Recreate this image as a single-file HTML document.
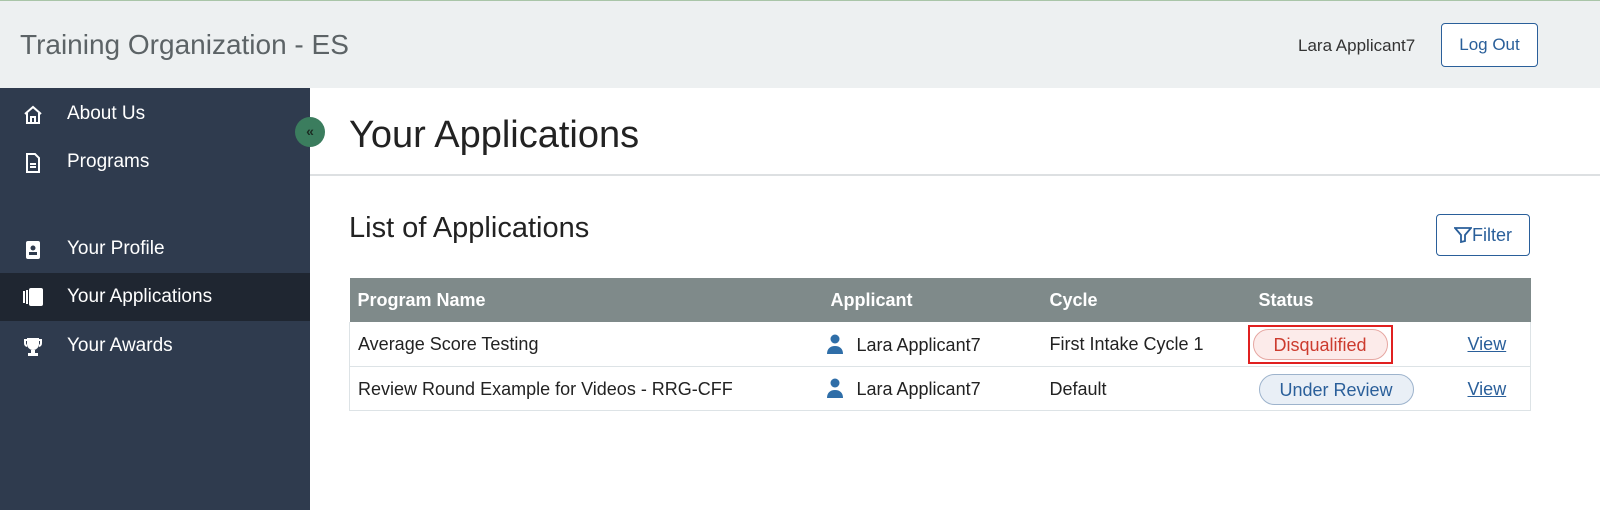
<!DOCTYPE html><html><head><style>
body{margin:0;width:1600px;height:510px;overflow:hidden;font-family:"Liberation Sans",sans-serif;background:#fff;position:relative}
.hdr{position:absolute;left:0;top:0;width:1600px;height:88px;background:#edf0f1;border-top:1px solid #a9c5a8;box-sizing:border-box}
.hdr .t{position:absolute;left:20px;top:28px;font-size:28px;color:#5c6366}
.hdr .u{position:absolute;left:1298px;top:35px;font-size:17px;color:#333}
.hdr .b{position:absolute;left:1441px;top:22px;width:97px;height:44px;border:1px solid #2a5f9a;border-radius:4px;background:#fff;color:#2a5f9a;font-size:17px;line-height:42px;text-align:center;box-sizing:border-box}
.side{position:absolute;left:0;top:88px;width:310px;height:422px;background:#2f3b4e}
.it{position:absolute;left:0;width:310px;height:44px;color:#fff;font-size:19px}
.it span{position:absolute;left:67px;top:12px}
.it svg{position:absolute;left:22px;top:13px}
.tog{position:absolute;left:295px;top:117px;width:30px;height:30px;border-radius:50%;background:#3b7d5e;color:#1b2b22;font-size:14px;font-weight:bold;text-align:center;line-height:28px}
h1{position:absolute;left:349px;top:114px;margin:0;font-weight:normal;font-size:38px;color:#222}
.div{position:absolute;left:310px;top:174px;width:1290px;height:2px;background:#dde0e2}
h2{position:absolute;left:349px;top:212px;margin:0;font-weight:normal;font-size:29px;color:#222}
.flt{position:absolute;left:1436px;top:214px;width:94px;height:42px;border:1px solid #2a5f9a;border-radius:4px;color:#2a5f9a;font-size:18px;box-sizing:border-box;line-height:40px;text-align:center}
table{position:absolute;left:349px;top:278px;width:1181px;border-collapse:collapse;font-size:18px;color:#222;table-layout:fixed}
th{background:#7f8a8a;color:#fff;text-align:left;height:44px;padding:0 0 0 8px;font-size:18px}
td{height:44px;padding:2px 0 0 8px;border-bottom:1px solid #dde3e6;box-sizing:border-box;white-space:nowrap}
tr td:first-child{border-left:1px solid #dde3e6}tr td:last-child{border-right:1px solid #dde3e6}
.pill{display:inline-block;border-radius:16px;padding:0 20px;height:31px;line-height:31px;font-size:18px;box-sizing:border-box}
a{color:#2a5f9a;text-decoration:underline}
</style></head><body>
<div class="hdr"><div class="t">Training Organization - ES</div><div class="u">Lara Applicant7</div><div class="b">Log Out</div></div>
<div class="side">
<div class="it" style="top:3px"><svg width="22" height="22" viewBox="0 0 22 22" fill="none" stroke="#fff" stroke-width="2"><path d="M3 10L11 3l8 7M5 9v10h12V9M9 19v-6h4v6"/></svg><span>About Us</span></div>
<div class="it" style="top:51px"><svg width="22" height="22" viewBox="0 0 22 22" fill="none" stroke="#fff" stroke-width="2"><path d="M5 2h8l4 4v14H5z"/><path d="M8 12h6M8 15h6"/></svg><span>Programs</span></div>
<div class="it" style="top:138px"><svg width="22" height="22" viewBox="0 0 22 22"><rect x="4" y="2" width="14" height="18" rx="2" fill="#fff"/><circle cx="11" cy="9" r="2.5" fill="#2f3b4e"/><rect x="7" y="13" width="8" height="3" fill="#2f3b4e"/></svg><span>Your Profile</span></div>
<div class="it" style="top:185px;background:#1f2631;height:48px"><svg width="22" height="22" viewBox="0 0 22 22" fill="#fff"><rect x="1" y="5" width="2" height="12"/><rect x="4" y="4" width="2" height="14"/><rect x="7" y="2" width="14" height="18" rx="2"/></svg><span style="top:13px">Your Applications</span></div>
<div class="it" style="top:235px"><svg width="22" height="22" viewBox="0 0 22 22" fill="#fff"><path d="M5 2h12v6a6 6 0 0 1-12 0zM2 3h3v2H4v2a2 2 0 0 0 1 2v2a4 4 0 0 1-3-4zM20 3h-3v2h1v2a2 2 0 0 1-1 2v2a4 4 0 0 0 3-4zM9 14h4v3h3v3H6v-3h3z"/></svg><span>Your Awards</span></div>
</div>
<div class="tog">«</div>
<h1>Your Applications</h1><div class="div"></div>
<h2>List of Applications</h2>
<div class="flt"><svg width="18" height="16" viewBox="0 0 18 16" fill="none" stroke="#2a5f9a" stroke-width="1.8" style="vertical-align:-2px"><path d="M1 1h16l-6 7v6l-4 1V8z"/></svg>Filter</div>
<table>
<colgroup><col style="width:473px"><col style="width:219px"><col style="width:209px"><col style="width:209px"><col style="width:71px"></colgroup>
<tr><th>Program Name</th><th>Applicant</th><th>Cycle</th><th>Status</th><th></th></tr>
<tr><td>Average Score Testing</td><td><svg width="18" height="20" viewBox="0 0 18 20" fill="#2f6ea8" style="vertical-align:-3px;margin:0 13px 0 -5px"><circle cx="9" cy="5" r="4.5"/><path d="M1 20c0-5 3-8 8-8s8 3 8 8z"/></svg>Lara Applicant7</td><td>First Intake Cycle 1</td><td><span style="display:inline-block;border:2px solid #e02020;padding:2px 3px;margin-left:-11px"><span class="pill" style="background:#fcebea;border:1px solid #e6a7a2;color:#cc3b2e">Disqualified</span></span></td><td><a>View</a></td></tr>
<tr><td>Review Round Example for Videos - RRG-CFF</td><td><svg width="18" height="20" viewBox="0 0 18 20" fill="#2f6ea8" style="vertical-align:-3px;margin:0 13px 0 -5px"><circle cx="9" cy="5" r="4.5"/><path d="M1 20c0-5 3-8 8-8s8 3 8 8z"/></svg>Lara Applicant7</td><td>Default</td><td><span class="pill" style="background:#e9eff6;border:1px solid #9db3cc;color:#2a5f9a">Under Review</span></td><td><a>View</a></td></tr>
</table>
</body></html>
